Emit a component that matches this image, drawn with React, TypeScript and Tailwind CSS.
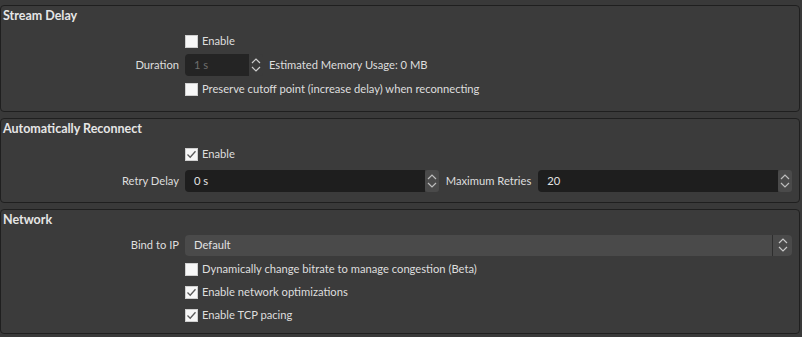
import React from "react";

const font = { fontFamily: 'Lato, "Open Sans", sans-serif' };

function Check({ checked }: { checked?: boolean }) {
  return (
    <div className="w-[13px] h-[13px] bg-[#f7f7f7] border border-[#cfcfcf] flex items-center justify-center shrink-0">
      {checked && (
        <svg width="11" height="11" viewBox="0 0 11 11">
          <path d="M1.5 5.5 L4.2 8.2 L9.5 2.2" fill="none" stroke="#5a5a5a" strokeWidth="1.3" />
        </svg>
      )}
    </div>
  );
}

function Arrows({ color = "#d8d8d8" }: { color?: string }) {
  return (
    <svg width="12" height="20" viewBox="0 0 12 20">
      <path d="M2 8 L6 4 L10 8" fill="none" stroke={color} strokeWidth="1.2" />
      <path d="M2 12 L6 16 L10 12" fill="none" stroke={color} strokeWidth="1.2" />
    </svg>
  );
}

function CheckRow({ label, checked, h = "h-[22px]" }: { label: string; checked?: boolean; h?: string }) {
  return (
    <div className={`flex items-center ${h}`}>
      <div className="w-[184px] shrink-0" />
      <Check checked={checked} />
      <span className="ml-[4px]">{label}</span>
    </div>
  );
}

function Spin({ value, disabled }: { value: string; disabled?: boolean }) {
  return (
    <div className="flex flex-1 h-[22px] items-stretch">
      <div
        className={`flex-1 rounded-l-[4px] flex items-center pl-[9px] ${
          disabled ? "bg-[#242424] text-[#6e6e6e]" : "bg-[#1e1e1e] text-[#e2e2e2]"
        }`}
      >
        {value}
      </div>
      <div
        className={`w-[14px] flex items-center justify-center rounded-[3px] ${
          disabled ? "bg-[#3b3b3b]" : "bg-[#4a4a4a]"
        }`}
      >
        <Arrows color={disabled ? "#cfcfcf" : "#bdbdbd"} />
      </div>
    </div>
  );
}

export default function App() {
  return (
    <div
      className="w-[802px] h-[337px] bg-[#393939] pt-[5px] flex flex-col gap-[6px] text-[11.2px] text-[#dedede] overflow-hidden"
      style={font}
    >
      {/* Stream Delay */}
      <div className="w-[800px] h-[107px] border border-[#1f1f1f] rounded-[4px] bg-[#3b3b3b] flex flex-col">
        <div className="h-[20px] flex items-center pl-[2px] font-bold text-[12.5px] text-[#e6e6e6]">Stream Delay</div>
        <div className="mt-[4px] flex flex-col gap-[2px]">
          <CheckRow label="Enable" />
          <div className="flex items-center h-[22px]">
            <div className="w-[178px] text-right shrink-0">Duration</div>
            <div className="w-[6px]" />
            <div className="w-[78px] flex">
              <Spin value="1 s" disabled />
            </div>
            <span className="ml-[6px]">Estimated Memory Usage: 0 MB</span>
          </div>
          <CheckRow label="Preserve cutoff point (increase delay) when reconnecting" h="h-[23px]" />
        </div>
      </div>

      {/* Automatically Reconnect */}
      <div className="w-[800px] h-[85px] border border-[#1f1f1f] rounded-[4px] bg-[#3b3b3b] flex flex-col">
        <div className="h-[20px] flex items-center pl-[2px] font-bold text-[12.5px] text-[#e6e6e6]">Automatically Reconnect</div>
        <div className="mt-[4px] flex flex-col gap-[5px]">
          <CheckRow label="Enable" checked />
          <div className="flex items-center h-[22px]">
            <div className="w-[178px] text-right shrink-0">Retry Delay</div>
            <div className="w-[6px]" />
            <div className="w-[607px] flex items-center">
              <Spin value="0 s" />
              <span className="mx-[7px]">Maximum Retries</span>
              <Spin value="20" />
            </div>
          </div>
        </div>
      </div>

      {/* Network */}
      <div className="w-[800px] h-[125px] border border-[#1f1f1f] rounded-[4px] bg-[#3b3b3b] flex flex-col">
        <div className="h-[20px] flex items-center pl-[2px] font-bold text-[12.5px] text-[#e6e6e6]">Network</div>
        <div className="mt-[4px] flex items-center h-[22px]">
          <div className="w-[178px] text-right shrink-0">Bind to IP</div>
          <div className="w-[6px]" />
          <div className="w-[607px] h-[21px] bg-[#4a4a4a] rounded-[4px] flex items-stretch">
            <div className="flex-1 flex items-center pl-[9px] text-[#e2e2e2]">Default</div>
            <div className="w-[1px] bg-[#2e2e2e]" />
            <div className="w-[19px] flex items-center justify-center">
              <Arrows color="#c8c8c8" />
            </div>
          </div>
        </div>
        <div className="mt-[2px] flex flex-col">
          <CheckRow label="Dynamically change bitrate to manage congestion (Beta)" h="h-[23px]" />
          <CheckRow label="Enable network optimizations" checked h="h-[23px]" />
          <CheckRow label="Enable TCP pacing" checked h="h-[23px]" />
        </div>
      </div>
    </div>
  );
}
